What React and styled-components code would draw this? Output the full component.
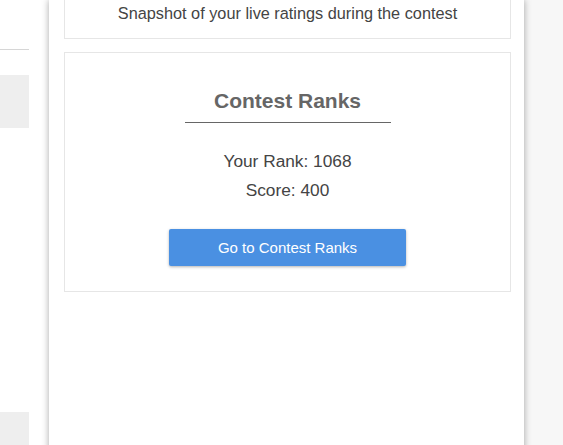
import React from "react";
import styled, { createGlobalStyle } from "styled-components";

const Global = createGlobalStyle`
  html, body { margin: 0; padding: 0; height: 100%; overflow: hidden; }
  body { background: #f7f7f7; font-family: "Liberation Sans", Arial, sans-serif; }
  #root { height: 100%; }
`;

const Page = styled.div`
  display: grid;
  grid-template-columns: 49px 475px 1fr;
  height: 445px;
  overflow: hidden;
`;

const Sidebar = styled.div`
  background: #fff;
  padding-right: 20px;
  display: flex;
  flex-direction: column;
`;

const SideRule = styled.div`
  margin-top: 49px;
  height: 1px;
  background: #d6d6d6;
`;

const SideBlock = styled.div`
  background: #eeeeee;
  height: ${(p) => p.$h}px;
  margin-top: ${(p) => p.$top}px;
`;

const Panel = styled.div`
  background: #fff;
  box-shadow: 0 0 7px rgba(0, 0, 0, 0.35);
  padding: 0 13px 0 15px;
  position: relative;
  z-index: 1;
`;

const Card = styled.section`
  border: 1px solid #e6e6e6;
  background: #fff;
  text-align: center;
  ${(p) => (p.$cut ? "border-top: none;" : "margin-top: 13px;")}
  padding: ${(p) => p.$pad};
`;

const Caption = styled.p`
  margin: 0;
  font-size: 16.3px;
  line-height: 19px;
  color: #444;
`;

const Title = styled.h3`
  margin: 0 auto;
  width: 206px;
  font-size: 21px;
  line-height: 24px;
  font-weight: bold;
  color: #666;
  padding-bottom: 9px;
  border-bottom: 1px solid #666;
`;

const Stat = styled.p`
  margin: 0;
  font-size: 17.3px;
  line-height: 29px;
  color: #444;
`;

const Stats = styled.div`
  margin-top: 24px;
`;

const Button = styled.button`
  display: block;
  margin: 24px auto 0;
  width: 237px;
  height: 37px;
  border: none;
  border-radius: 2px;
  background: #4a90e2;
  color: #fff;
  font-family: "Liberation Sans", Arial, sans-serif;
  font-size: 15px;
  box-shadow: 0 1px 3px rgba(0, 0, 0, 0.3);
  cursor: pointer;
`;

export default function App() {
  return (
    <>
      <Global />
      <Page>
        <Sidebar>
          <SideRule />
          <SideBlock $top={25} $h={53} />
          <SideBlock $top={284} $h={40} />
        </Sidebar>
        <Panel>
          <Card $cut $pad="4px 0 15px">
            <Caption>Snapshot of your live ratings during the contest</Caption>
          </Card>
          <Card $pad="36px 0 25px">
            <Title>Contest Ranks</Title>
            <Stats>
              <Stat>Your Rank: 1068</Stat>
              <Stat>Score: 400</Stat>
            </Stats>
            <Button>Go to Contest Ranks</Button>
          </Card>
        </Panel>
        <div />
      </Page>
    </>
  );
}
